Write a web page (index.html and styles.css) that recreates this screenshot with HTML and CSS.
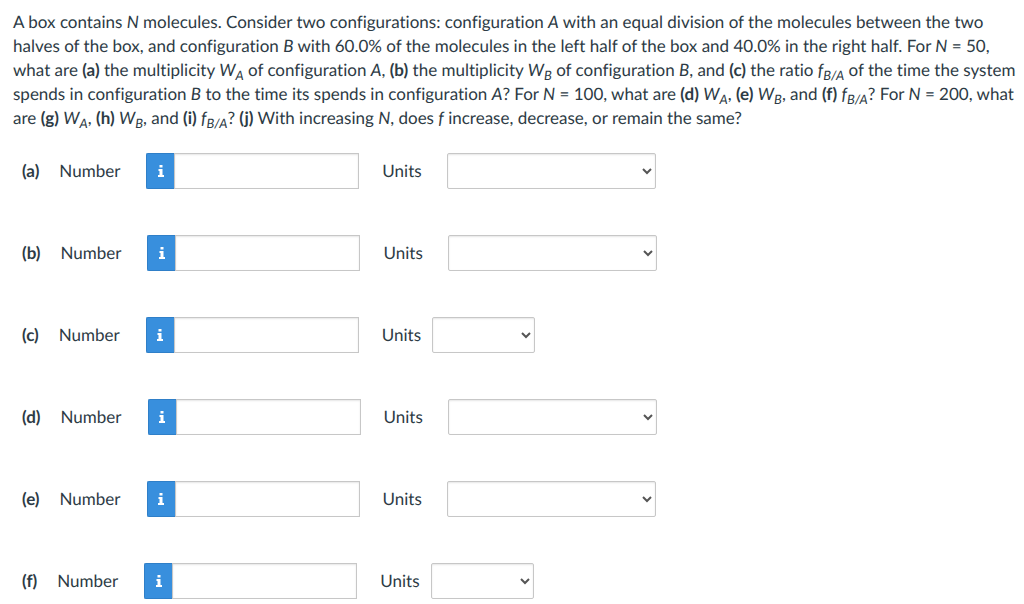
FILE: index.html
```html
<!DOCTYPE html>
<html lang="en">
<head>
    <meta charset="UTF-8">
    <meta name="viewport" content="width=device-width, initial-scale=1.0">
    <title>Multiplicity of Configurations</title>
    <link rel="stylesheet" href="styles.css">
</head>
<body>
    <svg class="defs" aria-hidden="true">
        <symbol id="info" viewBox="0 0 6 12">
            <path d="M1.5 0h3v2.5h-3z M0.5 4h4v6H6v2H0v-2h1.5V6h-1z"/>
        </symbol>
    </svg>
    <p class="question">
        A box contains <em>N</em> molecules. Consider two configurations: configuration <em>A</em> with an equal division of the molecules between the two halves of the box, and configuration <em>B</em> with 60.0% of the molecules in the left half of the box and 40.0% in the right half. For <em>N</em> = 50, what are <b>(a)</b> the multiplicity <em>W<sub>A</sub></em> of configuration <em>A</em>, <b>(b)</b> the multiplicity <em>W<sub>B</sub></em> of configuration <em>B</em>, and <b>(c)</b> the ratio <em>f<sub>B/A</sub></em> of the time the system spends in configuration <em>B</em> to the time its spends in configuration <em>A</em>? For <em>N</em> = 100, what are <b>(d)</b> <em>W<sub>A</sub></em>, <b>(e)</b> <em>W<sub>B</sub></em>, and <b>(f)</b> <em>f<sub>B/A</sub></em>? For <em>N</em> = 200, what are <b>(g)</b> <em>W<sub>A</sub></em>, <b>(h)</b> <em>W<sub>B</sub></em>, and <b>(i)</b> <em>f<sub>B/A</sub></em>? <b>(j)</b> With increasing <em>N</em>, does <em>f</em> increase, decrease, or remain the same?
    </p>
    <form class="answers">
        <div class="row">
            <b class="part">(a)</b>
            <label class="number" for="num-a">Number</label>
            <button class="info-btn" type="button" aria-label="Info"><svg><use href="#info"/></svg></button>
            <input class="value" type="text" id="num-a">
            <label class="units" for="unit-a">Units</label>
            <select class="unit" id="unit-a"><option></option></select>
        </div>
        <div class="row">
            <b class="part">(b)</b>
            <label class="number" for="num-b">Number</label>
            <button class="info-btn" type="button" aria-label="Info"><svg><use href="#info"/></svg></button>
            <input class="value" type="text" id="num-b">
            <label class="units" for="unit-b">Units</label>
            <select class="unit" id="unit-b"><option></option></select>
        </div>
        <div class="row">
            <b class="part">(c)</b>
            <label class="number" for="num-c">Number</label>
            <button class="info-btn" type="button" aria-label="Info"><svg><use href="#info"/></svg></button>
            <input class="value" type="text" id="num-c">
            <label class="units" for="unit-c">Units</label>
            <select class="unit short" id="unit-c"><option></option></select>
        </div>
        <div class="row">
            <b class="part">(d)</b>
            <label class="number" for="num-d">Number</label>
            <button class="info-btn" type="button" aria-label="Info"><svg><use href="#info"/></svg></button>
            <input class="value" type="text" id="num-d">
            <label class="units" for="unit-d">Units</label>
            <select class="unit" id="unit-d"><option></option></select>
        </div>
        <div class="row">
            <b class="part">(e)</b>
            <label class="number" for="num-e">Number</label>
            <button class="info-btn" type="button" aria-label="Info"><svg><use href="#info"/></svg></button>
            <input class="value" type="text" id="num-e">
            <label class="units" for="unit-e">Units</label>
            <select class="unit" id="unit-e"><option></option></select>
        </div>
        <div class="row">
            <b class="part">(f)</b>
            <label class="number" for="num-f">Number</label>
            <button class="info-btn" type="button" aria-label="Info"><svg><use href="#info"/></svg></button>
            <input class="value" type="text" id="num-f">
            <label class="units" for="unit-f">Units</label>
            <select class="unit short" id="unit-f"><option></option></select>
        </div>
    </form>
</body>
</html>
```
FILE: styles.css
```css
* {
    box-sizing: border-box;
}
body {
    margin: 0;
    padding: 10px 0 0 13px;
    font-family: Lato, sans-serif;
    font-size: 17px;
    line-height: 24px;
    color: #2d3b45;
    background-color: white;
    text-rendering: geometricPrecision;
    font-variant-ligatures: none;
}
.defs {
    display: none;
}
.question {
    margin: 0;
}
.question sub {
    font-size: 13px;
    line-height: 0;
    position: relative;
    vertical-align: baseline;
    bottom: -4px;
}
.answers {
    display: flex;
    flex-direction: column;
    gap: 46px;
    margin-top: 23px;
    padding-left: 9px;
}
.row {
    display: flex;
    align-items: center;
    height: 36px;
}
.number {
    margin-left: 20px;
}
.info-btn {
    display: flex;
    align-items: center;
    justify-content: center;
    width: 28px;
    height: 36px;
    margin-left: 26px;
    padding: 0;
    background-color: #388fdd;
    border: 1px solid #2f7fc8;
    border-right: none;
    border-radius: 2px 0 0 2px;
    cursor: pointer;
}
.info-btn svg {
    width: 6px;
    height: 12px;
    fill: white;
}
.value {
    width: 185px;
    height: 36px;
    padding: 0 8px;
    font: inherit;
    border: 1px solid #c7c7c7;
    box-shadow: inset 0 1px 2px rgba(0, 0, 0, 0.1);
}
.units {
    margin-left: 23px;
}
.unit {
    width: 209px;
    height: 36px;
    margin-left: 25px;
    font: inherit;
    color: #555;
    background-color: white;
    border: 1px solid #c7c7c7;
    border-radius: 2px;
    box-shadow: inset 0 1px 2px rgba(0, 0, 0, 0.1);
}
.unit.short {
    width: 103px;
    margin-left: 11px;
}
```
